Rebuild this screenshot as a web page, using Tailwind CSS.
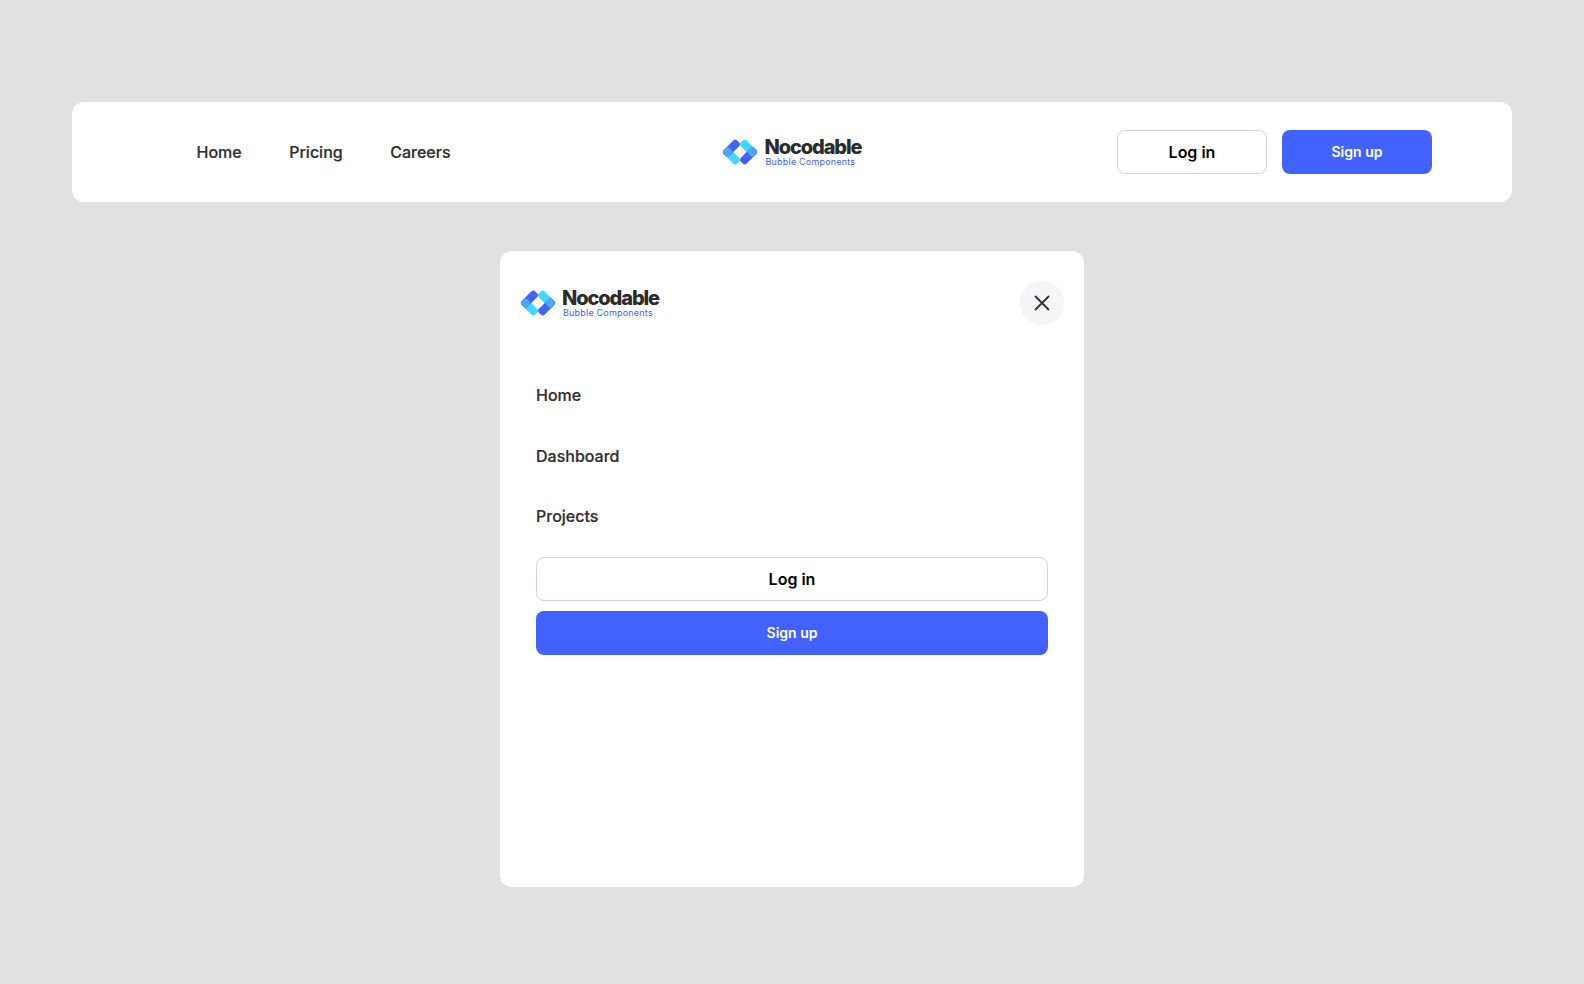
<!DOCTYPE html>
<html lang="en">
<head>
  <meta charset="UTF-8" />
  <meta name="viewport" content="width=device-width, initial-scale=1.0"/>
  <title>Nocodable | Navigation</title>
  <script src="https://cdn.jsdelivr.net/npm/@tailwindcss/browser@4"></script>
</head>
<body class="bg-[#e1e1e1] font-['Inter',sans-serif] text-[#2f2f2f]">

  <div class="min-h-screen flex flex-col items-center pt-[102px]">

    <!-- Desktop nav -->
    <header class="w-[1440px] h-[100px] bg-white rounded-xl grid grid-cols-3 items-center px-20">
      <nav class="flex items-center gap-[47.5px] pl-[44.5px] text-base font-medium [-webkit-text-stroke:0.2px_#2f2f2f]">
        <a href="#">Home</a>
        <a href="#">Pricing</a>
        <a href="#">Careers</a>
      </nav>

      <div class="flex justify-center">
        <a href="#" class="flex items-center gap-[6px]">
          <svg class="w-9 h-[26px]" viewBox="-1 -0.7 38 27.4">
            <rect x="-1.15" y="12.78" width="20.14" height="8.6" rx="3" transform="rotate(45 8.92 17.08)" fill="#3fd8ff"/>
            <rect x="-1.15" y="4.62" width="20.14" height="8.6" rx="3" transform="rotate(-45 8.92 8.92)" fill="#4262ff"/>
            <rect x="0.54" y="8.7" width="8.6" height="8.6" rx="3" transform="rotate(45 4.84 13)" fill="#4fa6ff"/>
            <rect x="17.01" y="4.62" width="20.14" height="8.6" rx="3" transform="rotate(45 27.08 8.92)" fill="#3fd8ff"/>
            <rect x="17.01" y="12.78" width="20.14" height="8.6" rx="3" transform="rotate(-45 27.08 17.08)" fill="#4262ff"/>
            <rect x="26.86" y="8.7" width="8.6" height="8.6" rx="3" transform="rotate(45 31.16 13)" fill="#4fa6ff"/>
          </svg>
          <span class="flex flex-col mb-[2px]">
            <span class="text-[20px] leading-[20px] font-extrabold tracking-[-1.1px] text-[#2b2b2b]">Nocodable</span>
            <span class="text-[9px] leading-[9px] tracking-[0.2px] pl-px text-[#4262ff]">Bubble Components</span>
          </span>
        </a>
      </div>

      <div class="flex justify-end gap-[15px]">
        <button class="w-[150px] h-11 bg-white border border-[#d1d5db] rounded-lg text-base font-semibold text-black">Log in</button>
        <button class="w-[150px] h-11 bg-[#4262ff] rounded-lg text-sm font-semibold text-white">Sign up</button>
      </div>
    </header>

    <!-- Mobile menu -->
    <div class="w-[584px] h-[636px] mt-[49px] bg-white rounded-xl px-[20px] pt-[30px]">
      <div class="flex items-center justify-between">
        <a href="#" class="flex items-center gap-[6px]">
          <svg class="w-9 h-[26px]" viewBox="-1 -0.7 38 27.4">
            <rect x="-1.15" y="12.78" width="20.14" height="8.6" rx="3" transform="rotate(45 8.92 17.08)" fill="#3fd8ff"/>
            <rect x="-1.15" y="4.62" width="20.14" height="8.6" rx="3" transform="rotate(-45 8.92 8.92)" fill="#4262ff"/>
            <rect x="0.54" y="8.7" width="8.6" height="8.6" rx="3" transform="rotate(45 4.84 13)" fill="#4fa6ff"/>
            <rect x="17.01" y="4.62" width="20.14" height="8.6" rx="3" transform="rotate(45 27.08 8.92)" fill="#3fd8ff"/>
            <rect x="17.01" y="12.78" width="20.14" height="8.6" rx="3" transform="rotate(-45 27.08 17.08)" fill="#4262ff"/>
            <rect x="26.86" y="8.7" width="8.6" height="8.6" rx="3" transform="rotate(45 31.16 13)" fill="#4fa6ff"/>
          </svg>
          <span class="flex flex-col mb-[2px]">
            <span class="text-[20px] leading-[20px] font-extrabold tracking-[-1.1px] text-[#2b2b2b]">Nocodable</span>
            <span class="text-[9px] leading-[9px] tracking-[0.2px] pl-px text-[#4262ff]">Bubble Components</span>
          </span>
        </a>
        <button class="w-11 h-11 rounded-full bg-[#f5f5f5] flex items-center justify-center">
          <svg class="w-4 h-4" viewBox="0 0 16 16" fill="none" stroke="#2f3140" stroke-width="1.8" stroke-linecap="round">
            <path d="M1.5 1.5l13 13M14.5 1.5l-13 13"/>
          </svg>
        </button>
      </div>

      <div class="px-4 mt-10">
        <nav class="flex flex-col text-base font-medium [-webkit-text-stroke:0.2px_#2f2f2f]">
          <a href="#" class="h-[60.5px] flex items-center">Home</a>
          <a href="#" class="h-[60.5px] flex items-center">Dashboard</a>
          <a href="#" class="h-[60.5px] flex items-center">Projects</a>
        </nav>
        <div class="flex flex-col gap-[10px] mt-[10.5px]">
          <button class="w-full h-11 bg-white border border-[#d1d5db] rounded-lg text-base font-semibold text-black">Log in</button>
          <button class="w-full h-11 bg-[#4262ff] rounded-lg text-sm font-semibold text-white">Sign up</button>
        </div>
      </div>
    </div>
  </div>
</body>
</html>
